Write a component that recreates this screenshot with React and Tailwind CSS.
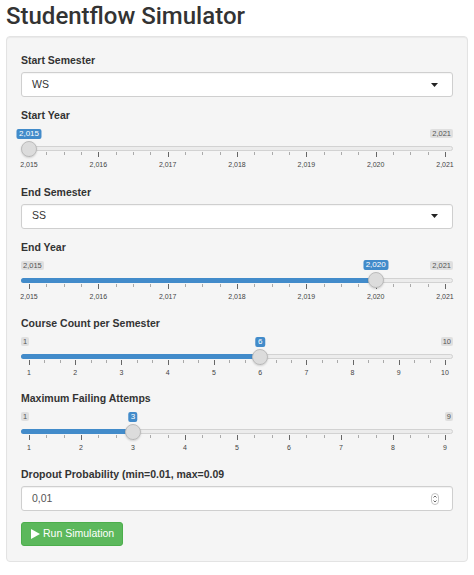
import React from "react";

const fmt = (n, comma) => (comma ? n.toLocaleString("en-US") : String(n));

function Slider({ min, max, value, subs, comma = false }) {
  const span = max - min;
  const pos = (v) => `calc(8px + ${(v - min) / span} * (100% - 16px))`;
  const ticks = [];
  for (let i = 0; i <= span * subs; i++) {
    ticks.push({ v: min + i / subs, major: i % subs === 0 });
  }

  return (
    <div className="relative h-[46px]">
      {value !== min && (
        <span className="absolute left-0 top-[2px] rounded-[2px] bg-[#dfdfdf] px-[2px] text-[7.5px] leading-[9px] text-[#555]">
          {fmt(min, comma)}
        </span>
      )}
      {value !== max && (
        <span className="absolute right-0 top-[2px] rounded-[2px] bg-[#dfdfdf] px-[2px] text-[7.5px] leading-[9px] text-[#555]">
          {fmt(max, comma)}
        </span>
      )}
      <span
        className="absolute top-[1.5px] -translate-x-1/2 rounded-[2px] bg-[#428bca] px-[2.5px] text-[8px] leading-[10px] text-white"
        style={{ left: pos(value) }}
      >
        {fmt(value, comma)}
      </span>

      <div className="absolute inset-x-0 top-[19px] h-[5px] rounded-full border border-[#d2d2d2] bg-[#ececec]" />
      {value !== min && (
        <div
          className="absolute left-0 top-[19px] h-[5px] rounded-l-full bg-[#428bca]"
          style={{ width: pos(value) }}
        />
      )}

      {ticks.map((t, i) => (
        <div
          key={i}
          className={`absolute top-[25px] w-px ${t.major ? "h-[5px] bg-[#666]" : "h-[3px] bg-[#aaa]"}`}
          style={{ left: pos(t.v) }}
        />
      ))}
      {ticks
        .filter((t) => t.major)
        .map((t, i) => (
          <span
            key={i}
            className="absolute top-[33px] -translate-x-1/2 text-[7px] leading-[10px] text-[#444]"
            style={{ left: pos(t.v) }}
          >
            {fmt(t.v, comma)}
          </span>
        ))}

      <div
        className="absolute top-[13.5px] h-4 w-4 -translate-x-1/2 rounded-full border border-[#bcbcbc] bg-[#dcdcdc] shadow-[0_1px_2px_rgba(0,0,0,0.15)]"
        style={{ left: pos(value) }}
      />
    </div>
  );
}

function Label({ children }) {
  return <div className="mb-[4px] text-[10.5px] font-bold leading-[15px] text-[#333]">{children}</div>;
}

function Select({ value }) {
  return (
    <div className="flex h-[25px] items-center justify-between rounded-[3px] border border-[#cfcfcf] bg-white pl-[10px] pr-[14px] text-[10.5px] text-[#333] shadow-[inset_0_1px_1px_rgba(0,0,0,0.04)]">
      <span>{value}</span>
      <svg width="7" height="4" viewBox="0 0 7 4">
        <path d="M0 0h7L3.5 4z" fill="#222" />
      </svg>
    </div>
  );
}

export default function App() {
  return (
    <div className="min-h-[575px] bg-white px-[6px] pt-[2px] font-['Liberation_Sans',Arial,sans-serif]">
      <h1 className="mb-[6px] font-['Roboto','Liberation_Sans',sans-serif] text-[24px] font-medium leading-[28px] text-[#333]">
        Studentflow Simulator
      </h1>

      <div className="flex flex-col rounded-[4px] border border-[#e3e3e3] bg-[#f5f5f5] px-[14px] pb-[15px] pt-[16px] shadow-[inset_0_1px_1px_rgba(0,0,0,0.05)]">
        <div className="mb-[11px]">
          <Label>Start Semester</Label>
          <Select value="WS" />
        </div>

        <div className="mb-[11.5px]">
          <Label>Start Year</Label>
          <Slider min={2015} max={2021} value={2015} subs={4} comma />
        </div>

        <div className="mb-[11px]">
          <Label>End Semester</Label>
          <Select value="SS" />
        </div>

        <div className="mb-[11.5px]">
          <Label>End Year</Label>
          <Slider min={2015} max={2021} value={2020} subs={4} comma />
        </div>

        <div className="mb-[10px]">
          <Label>Course Count per Semester</Label>
          <Slider min={1} max={10} value={6} subs={3} />
        </div>

        <div className="mb-[11px]">
          <Label>Maximum Failing Attemps</Label>
          <Slider min={1} max={9} value={3} subs={3} />
        </div>

        <div className="mb-[11px]">
          <Label>Dropout Probability (min=0.01, max=0.09</Label>
          <div className="flex h-[25px] items-center justify-between rounded-[3px] border border-[#cfcfcf] bg-white pl-[10px] pr-[13px] text-[10.5px] text-[#555] shadow-[inset_0_1px_1px_rgba(0,0,0,0.06)]">
            <span>0,01</span>
            <svg width="8" height="12" viewBox="0 0 8 12">
              <rect x="0.5" y="0.5" width="7" height="11" rx="3.5" fill="#fff" stroke="#c4c4c4" />
              <path d="M2.5 4.5L4 3l1.5 1.5M2.5 7.5L4 9l1.5-1.5" fill="none" stroke="#555" strokeWidth="0.9" />
            </svg>
          </div>
        </div>

        <button className="flex h-[24px] w-fit items-center gap-[3px] rounded-[3px] border border-[#4cae4c] bg-[#5cb85c] pl-[9px] pr-[8px] text-[10.5px] text-white">
          <svg width="9" height="10" viewBox="0 0 9 10">
            <path d="M0 0l9 5-9 5z" fill="#fff" />
          </svg>
          Run Simulation
        </button>
      </div>
    </div>
  );
}
